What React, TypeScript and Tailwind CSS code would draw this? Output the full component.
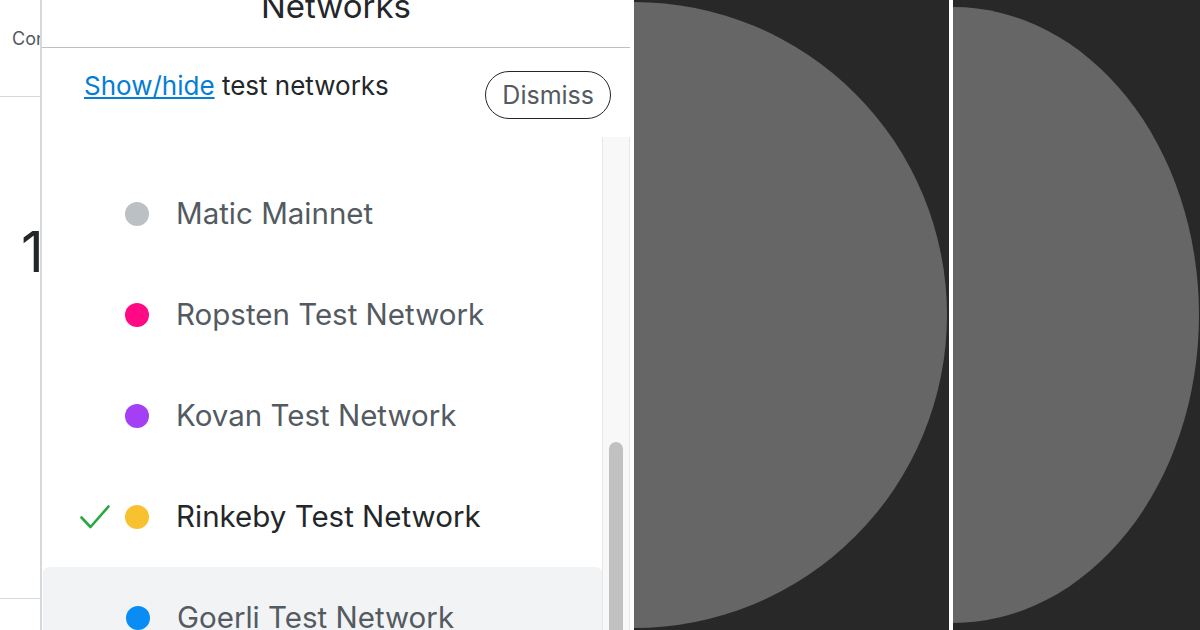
const networks = [
  { name: 'Matic Mainnet', color: 'bg-[#bbc0c5]' },
  { name: 'Ropsten Test Network', color: 'bg-[#ff0a84]' },
  { name: 'Kovan Test Network', color: 'bg-[#a43ff5]' },
  { name: 'Rinkeby Test Network', color: 'bg-[#f8c12f]', selected: true },
  { name: 'Goerli Test Network', color: 'bg-[#0a8cf5]', hovered: true },
];

function NetworkRow({ name, color, selected, hovered }: { name: string; color: string; selected?: boolean; hovered?: boolean }) {
  return (
    <div
      className={`flex h-[101px] shrink-0 items-center pl-[38px] ${hovered ? 'ml-px rounded-md bg-[#f2f3f4]' : ''}`}
    >
      <div className="flex w-[30px] items-center justify-center">
        {selected && (
          <svg width="30" height="26" viewBox="0 0 30 26" fill="none">
            <path d="M1.5 13.5 L10.5 23 L28.5 2.5" stroke="#28a745" strokeWidth="2.6" strokeLinecap="round" strokeLinejoin="round" />
          </svg>
        )}
      </div>
      <span className={`ml-[15px] h-[24px] w-[24px] rounded-full ${color}`} />
      <span className={`ml-[27px] text-[29.5px] leading-none ${selected ? 'text-[#24272a]' : 'text-[#535a61]'}`}>
        {name}
      </span>
    </div>
  );
}

export default function App() {
  return (
    <div className="flex h-[630px] w-[1200px] overflow-hidden bg-white font-['Inter',sans-serif]">
      {/* Page behind the popup */}
      <div className="flex w-[40px] shrink-0 flex-col overflow-hidden">
        <div className="h-[97px] shrink-0 border-b border-[#d6d9dc] pl-[12px] pt-[25px]">
          <span className="whitespace-nowrap text-[18px] text-[#535a61]">Contract</span>
        </div>
        <div className="h-[502px] shrink-0 border-b border-[#d6d9dc] pl-[21px] pt-[127px]">
          <span className="text-[56px] leading-none text-[#24272a]">1</span>
        </div>
      </div>

      {/* Networks dropdown */}
      <div className="flex w-[590px] shrink-0 flex-col border-l-2 border-[#d6d9dc]">
        <div className="flex h-[48px] shrink-0 items-end justify-center overflow-hidden border-b border-[#bbc0c5] pb-[24px]">
          <span className="text-[33px] leading-none text-[#24272a]">Networks</span>
        </div>

        <div className="flex h-[89px] shrink-0 items-start justify-between pl-[42px] pr-[19px] pt-[23px]">
          <p className="text-[26px] leading-[30px] text-[#24272a]">
            <a href="#" className="text-[#037dd6] underline underline-offset-2">Show/hide</a> test networks
          </p>
          <button className="h-[48px] rounded-full border-[1.5px] border-[#24272a] px-[16px] text-[25px] leading-none text-[#535a61]">
            Dismiss
          </button>
        </div>

        <div className="flex min-h-0 flex-1">
          <div className="flex flex-1 flex-col pt-[26px]">
            {networks.map((n) => (
              <NetworkRow key={n.name} {...n} />
            ))}
          </div>
          <div className="flex w-[28px] shrink-0 flex-col border-x border-[#e6e6e6] bg-[#f8f8f8] pt-[305px]">
            <div className="mx-auto w-[14px] flex-1 rounded-t-full bg-[#c1c1c1]" />
          </div>
        </div>
      </div>

      <div className="w-[4px] shrink-0 bg-white" />

      {/* Dark preview panels */}
      <div className="w-[315px] shrink-0 bg-[#282828]">
        <svg width="315" height="630" viewBox="0 0 315 630">
          <circle cx="0" cy="315" r="313" fill="#666666" />
        </svg>
      </div>

      <div className="w-[4px] shrink-0 bg-white" />

      <div className="flex-1 bg-[#282828]">
        <svg width="247" height="630" viewBox="0 0 247 630">
          <ellipse cx="0" cy="315" rx="246" ry="308" fill="#666666" />
        </svg>
      </div>
    </div>
  );
}
